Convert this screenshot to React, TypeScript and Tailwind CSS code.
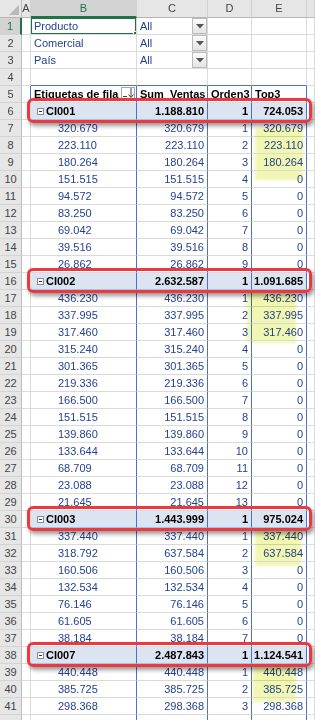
// Excel pivot sheet: Top3 per client, with red call-out boxes on the
// group subtotal rows and a yellow highlighter over the kept values.

type Item = { b: string; c: string; d: string; e: string };
type Hi = { left: string; top: string; w: string; h: string };
type Group = { name: string; c: string; e: string; items: Item[]; hi: Hi };

const GRID = "relative grid h-[17px] grid-cols-[22px_9px_106px_71px_44px_55px_1fr]";
const INK = "text-[#24428f]";
const CELL = "flex items-center overflow-hidden whitespace-nowrap border-b border-r border-[#dadada]";
const BLUE_R = "border-r-[#4a72c8]";

function it(b: string, c: string, d: string, e: string): Item {
  return { b, c, d, e };
}

const groups: Group[] = [
  {
    name: "CI001",
    c: "1.188.810",
    e: "724.053",
    hi: { left: "left-[255px]", top: "top-[8px]", w: "w-[48px]", h: "h-[52px]" },
    items: [
      it("320.679", "320.679", "1", "320.679"),
      it("223.110", "223.110", "2", "223.110"),
      it("180.264", "180.264", "3", "180.264"),
      it("151.515", "151.515", "4", "0"),
      it("94.572", "94.572", "5", "0"),
      it("83.250", "83.250", "6", "0"),
      it("69.042", "69.042", "7", "0"),
      it("39.516", "39.516", "8", "0"),
      it("26.862", "26.862", "9", "0"),
    ],
  },
  {
    name: "CI002",
    c: "2.632.587",
    e: "1.091.685",
    hi: { left: "left-[247px]", top: "top-[3px]", w: "w-[49px]", h: "h-[50px]" },
    items: [
      it("436.230", "436.230", "1", "436.230"),
      it("337.995", "337.995", "2", "337.995"),
      it("317.460", "317.460", "3", "317.460"),
      it("315.240", "315.240", "4", "0"),
      it("301.365", "301.365", "5", "0"),
      it("219.336", "219.336", "6", "0"),
      it("166.500", "166.500", "7", "0"),
      it("151.515", "151.515", "8", "0"),
      it("139.860", "139.860", "9", "0"),
      it("133.644", "133.644", "10", "0"),
      it("68.709", "68.709", "11", "0"),
      it("23.088", "23.088", "12", "0"),
      it("21.645", "21.645", "13", "0"),
    ],
  },
  {
    name: "CI003",
    c: "1.443.999",
    e: "975.024",
    hi: { left: "left-[255px]", top: "top-[3px]", w: "w-[46px]", h: "h-[35px]" },
    items: [
      it("337.440", "337.440", "1", "337.440"),
      it("318.792", "637.584", "2", "637.584"),
      it("160.506", "160.506", "3", "0"),
      it("132.534", "132.534", "4", "0"),
      it("76.146", "76.146", "5", "0"),
      it("61.605", "61.605", "6", "0"),
      it("38.184", "38.184", "7", "0"),
    ],
  },
  {
    name: "CI007",
    c: "2.487.843",
    e: "1.124.541",
    hi: { left: "left-[253px]", top: "top-[2px]", w: "w-[43px]", h: "h-[36px]" },
    items: [
      it("440.448", "440.448", "1", "440.448"),
      it("385.725", "385.725", "2", "385.725"),
      it("298.368", "298.368", "3", "298.368"),
    ],
  },
];

function RowHead({ n, active }: { n?: number; active?: boolean }) {
  return (
    <div
      className={
        "flex items-center justify-center border-b border-r border-b-[#d4d4d4] " +
        (active
          ? "border-r-2 border-r-[#217346] bg-[#d3d3d3] text-[#217346]"
          : "border-r-[#bdbdbd] bg-[#e6e6e6] text-[#444]")
      }
    >
      {n}
    </div>
  );
}

function DropButton() {
  return (
    <div className="ml-auto flex h-[16px] w-[15px] shrink-0 items-center justify-center border border-[#bcbcbc] bg-gradient-to-b from-[#fbfbfb] to-[#e4e4e4]">
      <svg width="8" height="5" viewBox="0 0 8 5">
        <polygon points="0,0 8,0 4,4.5" fill="#555" />
      </svg>
    </div>
  );
}

function ColumnHeader() {
  const h = "flex items-center justify-center border-b border-r border-b-[#b5b5b5] border-r-[#d0d0d0] bg-[#e6e6e6] text-[#444]";
  return (
    <div className="grid h-[18px] grid-cols-[22px_9px_106px_71px_44px_55px_1fr]">
      <div className="relative border-b border-r border-b-[#b5b5b5] border-r-[#bdbdbd] bg-[#e6e6e6]">
        <svg className="absolute bottom-[2px] right-[2px]" width="10" height="10" viewBox="0 0 10 10">
          <polygon points="10,0 10,10 0,10" fill="#b8b8b8" />
        </svg>
      </div>
      <div className={h}>A</div>
      <div className="flex items-center justify-center border-b-2 border-r border-b-[#217346] border-r-[#d0d0d0] bg-[#d3d3d3] text-[#217346]">
        B
      </div>
      <div className={h}>C</div>
      <div className={h}>D</div>
      <div className={h}>E</div>
      <div className={h} />
    </div>
  );
}

function FilterRow({ n, label }: { n: number; label: string }) {
  const active = n === 1;
  return (
    <div className={GRID}>
      <RowHead n={n} active={active} />
      <div className={CELL} />
      <div className={CELL + " relative pl-[3px] " + INK}>
        {label}
        {active && (
          <>
            <div className="pointer-events-none absolute -left-px -top-px bottom-[-1px] right-[-1px] border-2 border-[#217346]" />
            <div className="absolute bottom-[-4px] right-[-4px] h-[7px] w-[7px] border border-white bg-[#217346]" />
          </>
        )}
      </div>
      <div className={CELL + " pl-[3px] " + INK}>
        All
        <DropButton />
      </div>
      <div className={CELL} />
      <div className={CELL} />
      <div className={CELL} />
    </div>
  );
}

function PivotHeader() {
  return (
    <div className={GRID}>
      <RowHead n={5} />
      <div className={CELL + " " + BLUE_R} />
      <div className={CELL + " pl-[3px] pr-px font-bold text-black " + BLUE_R}>
        Etiquetas de fila
        <div className="ml-auto flex h-[14px] w-[14px] shrink-0 items-end justify-center gap-px border border-[#a6a6a6] bg-white pb-[2px]">
          <div className="mb-[1px] h-px w-[4px] bg-[#444]" />
          <svg width="6" height="10" viewBox="0 0 6 10">
            <line x1="3" y1="0" x2="3" y2="9" stroke="#444" strokeWidth="1" />
            <polyline points="0.5,6.5 3,9.5 5.5,6.5" fill="none" stroke="#444" strokeWidth="1" />
          </svg>
        </div>
      </div>
      <div className={CELL + " pl-[3px] font-bold text-black " + BLUE_R}>Sum_Ventas</div>
      <div className={CELL + " pl-[3px] font-bold text-black " + BLUE_R}>Orden3</div>
      <div className={CELL + " pl-[3px] font-bold text-black " + BLUE_R}>Top3</div>
      <div className={CELL} />
    </div>
  );
}

function GroupRow({ n, g }: { n: number; g: Group }) {
  const gc = "flex items-center overflow-hidden whitespace-nowrap border-b border-r border-b-[#aebfe2] bg-[#dce3f1] font-bold text-black " + BLUE_R;
  return (
    <div className={GRID}>
      <RowHead n={n} />
      <div className={CELL} />
      <div className={gc + " pl-[6px]"}>
        <div className="mr-[2px] flex h-[7px] w-[7px] items-center justify-center border border-[#8c8c8c] bg-white">
          <div className="h-px w-[3px] bg-[#333]" />
        </div>
        {g.name}
      </div>
      <div className={gc + " justify-end pr-[3px]"}>{g.c}</div>
      <div className={gc + " justify-end pr-[3px]"}>1</div>
      <div className={gc + " justify-end pr-[3px]"}>{g.e}</div>
      <div className={CELL} />
      <div className="pointer-events-none absolute -top-[5px] left-[27px] z-10 h-[25px] w-[285px] rounded-[6px] border-[3px] border-[#ea3a40] shadow-[2px_3px_4px_rgba(0,0,0,0.4)]" />
    </div>
  );
}

function ItemRow({ n, item, hi }: { n: number; item: Item; hi?: Hi }) {
  return (
    <div className={GRID}>
      <RowHead n={n} />
      <div className={CELL} />
      <div className={CELL + " pl-[27px] " + INK + " " + BLUE_R}>{item.b}</div>
      <div className={CELL + " justify-end pr-[3px] " + INK + " " + BLUE_R}>{item.c}</div>
      <div className={CELL + " justify-end pr-[3px] " + INK + " " + BLUE_R}>{item.d}</div>
      <div className={CELL + " justify-end pr-[3px] " + INK + " " + BLUE_R}>{item.e}</div>
      <div className={CELL} />
      {hi && (
        <div
          className={
            "pointer-events-none absolute bg-[#f1f6b0] mix-blend-multiply blur-[1.5px] " +
            hi.left + " " + hi.top + " " + hi.w + " " + hi.h
          }
        />
      )}
    </div>
  );
}

// row 4 (blue line under it marks the pivot top) and the partly visible last row
function BlankRow({ n, blueBottom }: { n?: number; blueBottom?: boolean }) {
  const b = blueBottom ? " border-b-[#4a72c8]" : "";
  const r = blueBottom ? "" : " " + BLUE_R;
  return (
    <div className={GRID}>
      <RowHead n={n} />
      <div className={CELL} />
      <div className={CELL + b + r} />
      <div className={CELL + b + r} />
      <div className={CELL + b + r} />
      <div className={CELL + b + r} />
      <div className={CELL} />
    </div>
  );
}

export default function App() {
  const rows: React.ReactNode[] = [];
  let n = 6;
  for (const g of groups) {
    rows.push(<GroupRow key={"g" + n} n={n} g={g} />);
    n++;
    g.items.forEach((item, i) => {
      rows.push(<ItemRow key={"r" + n} n={n} item={item} hi={i === 0 ? g.hi : undefined} />);
      n++;
    });
  }

  return (
    <div className="h-[720px] w-[315px] overflow-hidden bg-white font-['Liberation_Sans',Arial,sans-serif] text-[11px] leading-none">
      <ColumnHeader />
      <FilterRow n={1} label="Producto" />
      <FilterRow n={2} label="Comercial" />
      <FilterRow n={3} label="País" />
      <BlankRow n={4} blueBottom />
      <PivotHeader />
      {rows}
      <BlankRow />
    </div>
  );
}
